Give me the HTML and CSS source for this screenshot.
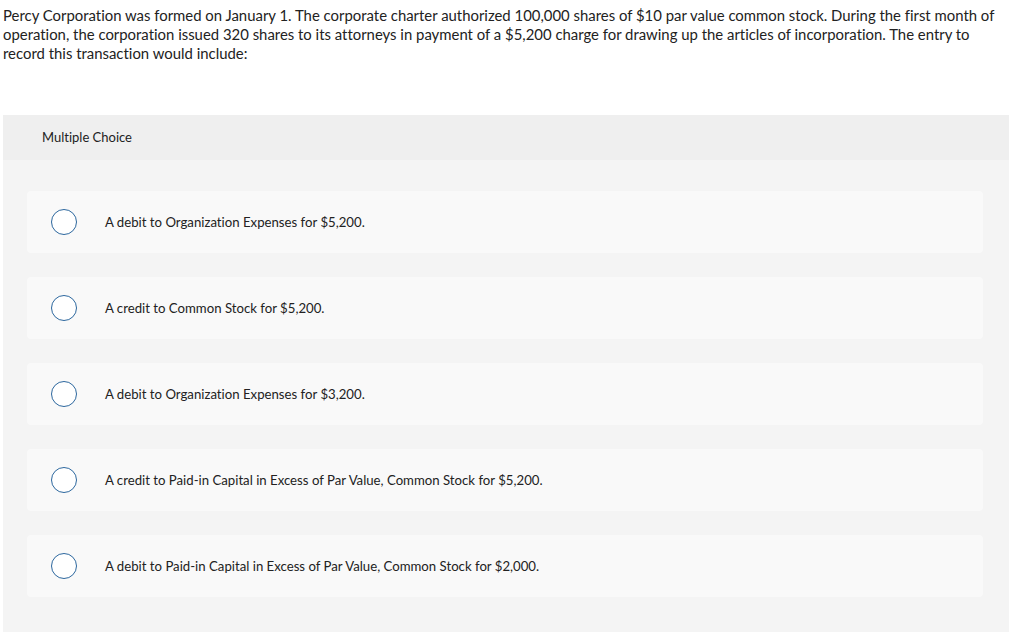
FILE: index.html
```html
<html>
<head>
    <link rel="stylesheet" href="styles.css">
</head>
<body>
    <div class="question">
        Percy Corporation was formed on January 1. The corporate charter authorized 100,000 shares of $10 par value common stock. During the first month of operation, the corporation issued 320 shares to its attorneys in payment of a $5,200 charge for drawing up the articles of incorporation. The entry to record this transaction would include:
    </div>

    <div class="panel">
        <div class="panel-head">Multiple Choice</div>
        <div class="choices">
            <div class="choice">
                <span class="radio"></span>
                <span class="label">A debit to Organization Expenses for $5,200.</span>
            </div>
            <div class="choice">
                <span class="radio"></span>
                <span class="label">A credit to Common Stock for $5,200.</span>
            </div>
            <div class="choice">
                <span class="radio"></span>
                <span class="label">A debit to Organization Expenses for $3,200.</span>
            </div>
            <div class="choice">
                <span class="radio"></span>
                <span class="label">A credit to Paid-in Capital in Excess of Par Value, Common Stock for $5,200.</span>
            </div>
            <div class="choice">
                <span class="radio"></span>
                <span class="label">A debit to Paid-in Capital in Excess of Par Value, Common Stock for $2,000.</span>
            </div>
        </div>
    </div>
</body>
</html>
```

FILE: styles.css
```css
body {
    font-family: Lato, "Open Sans", sans-serif;
    font-variant-ligatures: none;
    margin: 0;
    padding: 0 15px 0 3px;
    color: #222;
    background-color: white;
}

.question {
    font-size: 14.9px;
    line-height: 19px;
    padding-top: 6px;
}

.panel {
    margin-top: 52px;
    background-color: #f4f4f4;
    border-radius: 2px;
    padding-bottom: 40px;
}

.panel-head {
    height: 45px;
    line-height: 45px;
    padding-left: 39px;
    font-size: 13px;
    background-color: #efefef;
}

.choices {
    display: flex;
    flex-direction: column;
    gap: 24px;
    padding: 31px 26px 0 24px;
}

.choice {
    display: flex;
    align-items: center;
    height: 62px;
    background-color: #f9f9f9;
    border-radius: 4px;
    font-size: 13.2px;
}

.radio {
    width: 24px;
    height: 24px;
    border: 1.5px solid #2c679e;
    border-radius: 50%;
    margin-left: 24px;
    margin-right: 28px;
    background-color: white;
}
```
